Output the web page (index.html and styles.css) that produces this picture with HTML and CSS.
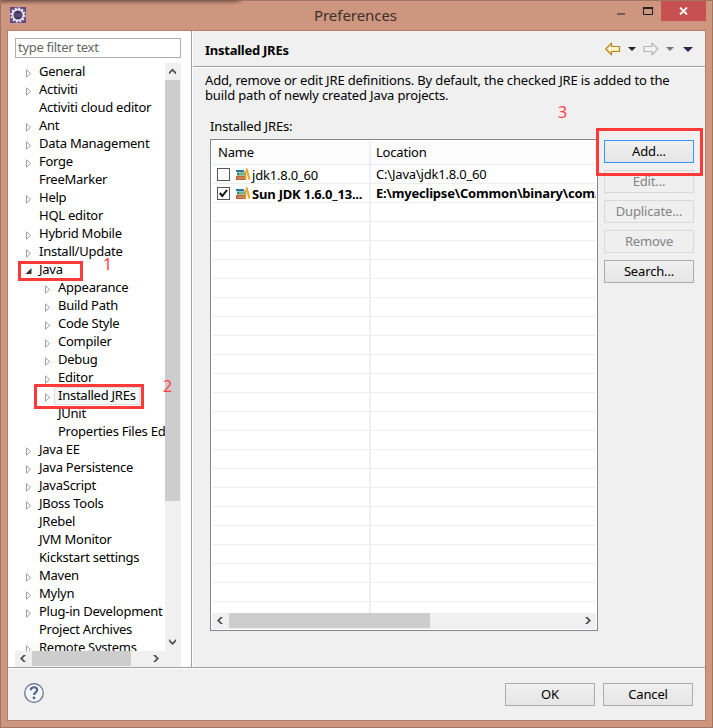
FILE: index.html
```html
<!DOCTYPE html>
<html lang="en">
<head>
<meta charset="utf-8">
<title>Preferences</title>
<link rel="stylesheet" href="styles.css">
</head>
<body>
<div class="window">
  <header class="titlebar">
    <svg class="app-icon" width="16" height="16" viewBox="0 0 16 16"><rect width="16" height="16" fill="#634786"/><circle cx="8" cy="8" r="6.800" fill="none" stroke="#e8e4e8" stroke-width="1.800" stroke-dasharray="2 1.560"/><circle cx="8" cy="8" r="5.400" fill="#40345e" stroke="#efedf0" stroke-width="1.600"/><path d="M4 7h8M4 9h8" stroke="#6d6090"/></svg>
    <h1 class="title">Preferences</h1>
    <div class="controls">
      <svg width="50" height="20" viewBox="0 0 50 20"><path d="M2 12h8v2H2z" fill="#745c53"/><path d="M28 6h10v8H28z" fill="#222"/><path d="M29 8h8v5h-8z" fill="#ce967e"/></svg>
      <button class="close"><svg width="9" height="8" viewBox="0 0 9 8"><path d="M1 .5l7 7M8 .5l-7 7" stroke="#fff" stroke-width="1.800"/></svg></button>
    </div>
  </header>
  <div class="client">
    <div class="main">
      <aside class="sidebar">
        <div class="filter">type filter text</div>
        <div class="treebox">
          <ul class="tree" id="tree"></ul>
          <div class="vbar">
            <svg width="15" height="17" viewBox="0 0 15 17"><path d="M4 11.500V9l3.500-3.500L11 9v2.500L7.500 8z" fill="#505050"/></svg>
            <div class="vthumb"></div>
            <svg class="down" width="15" height="17" viewBox="0 0 15 17"><path d="M4 5v2.500L7.500 11 11 7.500V5L7.500 8.500z" fill="#505050"/></svg>
          </div>
          <div class="hbar">
            <svg width="17" height="16" viewBox="0 0 17 16"><path d="M11 4H8.500L5 7.500 8.500 11H11L7.500 7.500z" fill="#505050"/></svg>
            <div class="hthumb"></div>
            <svg class="right" width="17" height="16" viewBox="0 0 17 16"><path d="M5 4h2.500L11 7.500 7.500 11H5l3.500-3.500z" fill="#505050"/></svg>
          </div>
        </div>
      </aside>
      <section class="page">
        <div class="page-head">
          <h2>Installed JREs</h2>
          <svg class="nav" width="90" height="14" viewBox="0 0 90 14">
            <defs><linearGradient id="gold" x2="0" y2="1"><stop stop-color="#fffef0"/><stop offset="1" stop-color="#fbe5a0"/></linearGradient></defs>
            <path d="M.8 7L6.500 1.200V4.500h8v5h-8v3.300z" fill="url(#gold)" stroke="#b9821e" stroke-width="1.200" stroke-linejoin="round"/>
            <path d="M23 5h8l-4 4z" fill="#222"/>
            <path d="M52.800 7L47 1.200V4.500h-8v5h8v3.300z" fill="#f4f4f4" stroke="#b4b4b4" stroke-width="1.200" stroke-linejoin="round"/>
            <path d="M61 5h8l-4 4z" fill="#777"/>
            <path d="M78 5h10L83 10z" fill="#35204f"/>
          </svg>
        </div>
        <div class="page-body">
          <p class="desc">Add, remove or edit JRE definitions. By default, the checked JRE is added to the<br>build path of newly created Java projects.</p>
          <div class="label">Installed JREs:</div>
          <div class="jres">
            <div class="table">
              <div class="grid">
                <div class="row head"><span>Name</span><span>Location</span></div>
                <div class="row"><span class="name"><i class="check"></i><svg class="books" width="16" height="13" viewBox="0 0 16 13"><path d="M1 2h8v2H1z" fill="#2477a6"/><path d="M2 4.500h8v3H2z" fill="#31895c"/><path d="M4 5.500h6v1H4z" fill="#b8dbb4"/><path d="M1 8h10v4H1z" fill="#bb663c"/><path d="M3 9.500h8v1H3z" fill="#e0a27c"/><path d="M10.500 1l2-1 3 11-2 1z" fill="#e9ac26"/><path d="M10.500 3v9" stroke="#d9982a" stroke-width="1.500"/></svg><b class="t">jdk1.8.0_60</b></span><span>C:\Java\jdk1.8.0_60</span></div>
                <div class="row bold"><span class="name"><i class="check"><svg width="11" height="11" viewBox="0 0 11 11"><path d="M1.800 5l2.500 3L9 2" fill="none" stroke="#111" stroke-width="2"/></svg></i><svg class="books" width="16" height="13" viewBox="0 0 16 13"><path d="M1 2h8v2H1z" fill="#2477a6"/><path d="M2 4.500h8v3H2z" fill="#31895c"/><path d="M4 5.500h6v1H4z" fill="#b8dbb4"/><path d="M1 8h10v4H1z" fill="#bb663c"/><path d="M3 9.500h8v1H3z" fill="#e0a27c"/><path d="M10.500 1l2-1 3 11-2 1z" fill="#e9ac26"/><path d="M10.500 3v9" stroke="#d9982a" stroke-width="1.500"/></svg><b class="t">Sun JDK 1.6.0_13...</b></span><span class="path">E:\myeclipse\Common\binary\com.</span></div>
              </div>
              <div class="tbar">
                <svg width="17" height="16" viewBox="0 0 17 16"><path d="M11 4H8.500L5 7.500 8.500 11H11L7.500 7.500z" fill="#505050"/></svg>
                <div class="tthumb"></div>
                <svg class="right" width="17" height="16" viewBox="0 0 17 16"><path d="M6 4h2.500L12 7.500 8.500 11H6l3.500-3.500z" fill="#505050"/></svg>
              </div>
            </div>
            <div class="actions">
              <button class="btn focus">Add...</button>
              <button class="btn off">Edit...</button>
              <button class="btn off">Duplicate...</button>
              <button class="btn off">Remove</button>
              <button class="btn">Search...</button>
            </div>
          </div>
        </div>
      </section>
    </div>
    <footer class="footer">
      <svg width="20" height="20" viewBox="0 0 20 20"><circle cx="10" cy="10" r="9.300" fill="#f4f5f7" stroke="#5c6c8b" stroke-width="1.200"/><path d="M6.800 7.300C7 3.200 13.300 3.400 13.100 7c-.1 2.300-3 2.500-3 5" fill="none" stroke="#52678c" stroke-width="2.200"/><circle cx="10" cy="14.900" r="1.400" fill="#52678c"/></svg>
      <button class="btn ok">OK</button>
      <button class="btn">Cancel</button>
    </footer>
  </div>
  <div class="mark m1"></div><div class="mark m2"></div><div class="mark m3"></div>
  <span class="num n1">1</span><span class="num n2">2</span><span class="num n3">3</span>
</div>
<script src="tree.js"></script>
</body>
</html>
```
FILE: styles.css
```css
* { box-sizing: border-box; }
body { margin: 0; font: 13px/18px "Noto Sans", sans-serif; color: #000; overflow: hidden; }
svg { display: block; flex: none; }
button { font: inherit; padding: 0; margin: 0; }
.window { position: relative; width: 713px; height: 728px; padding: 0 6px 6px; background: #ce967e; border: 1px solid #a07562; display: flex; flex-direction: column; }
.window::before { content: ""; position: absolute; left: 0; top: -1px; width: 243px; height: 5px; background: linear-gradient(#7f5c4e, #ce967e00); mask-image: linear-gradient(90deg, #000 96%, transparent); }
.titlebar { height: 29px; flex: none; display: flex; align-items: flex-start; }
.app-icon { margin: 6px 0 0 3px; }
.title { margin: 3px 0 0 288px; font-size: 15px; line-height: 22px; font-weight: 400; color: #3a302c; width: 84px; white-space: nowrap; letter-spacing: -.05px; }
.controls { display: flex; margin-left: auto; }
.controls > svg { margin: 0 -4px 0 0; }
.close { width: 45px; height: 20px; border: 0; background: #c75050; display: flex; align-items: center; justify-content: center; }
.client { flex: 1; min-height: 0; display: flex; flex-direction: column; background: #f0f0f0; border: 1px solid #b17f6a; }
.main { height: 637px; flex: none; display: flex; border-bottom: 1px solid #a0a0a0; }
.sidebar { width: 184px; flex: none; background: #fff; border-right: 1px solid #a0a0a0; padding: 7px 10px 0 7px; }
.filter { height: 20px; border: 1px solid #abadb3; color: #666; line-height: 17px; padding-left: 2px; letter-spacing: -.3px; }
.treebox { margin-top: 5px; display: grid; grid-template: 588px 16px / 150px 16px; background: #f0f0f0; }
.tree { margin: 0; padding: 0; list-style: none; overflow: hidden; background: #fff; letter-spacing: -.25px; }
.tree li { height: 18px; display: flex; align-items: center; padding-left: 10px; white-space: nowrap; }
.tree li svg { margin: 3px 7px 0 0; }
.tree li.child { padding-left: 29px; }
.tree span { height: 18px; line-height: 16px; }
.tree .selected { background: #f7f7f7; outline: 1px solid #dedede; outline-offset: -1px; padding: 0 4px; margin-left: -4px; }
.vbar { display: flex; flex-direction: column; }
.vthumb { width: 15px; height: 421px; background: #cdcdcd; }
.down { margin-top: auto; }
.hbar, .tbar { display: flex; background: #f0f0f0; }
.hthumb { width: 99px; height: 15px; background: #cdcdcd; }
.right { margin-left: auto; }
.page { flex: 1; min-width: 0; border-left: 1px solid #fff; }
.page-head { height: 36px; border-bottom: 1px solid #a0a0a0; box-shadow: 0 1px #fff; display: flex; align-items: center; justify-content: space-between; padding: 0 10px 0 12px; }
h2 { margin: 2px 0 0; font-size: 13px; line-height: 18px; letter-spacing: -.25px; }
.nav { margin-top: 1px; }
.page-body { padding: 6px 2px 0 12px; }
.desc { margin: 0; line-height: 15px; white-space: nowrap; letter-spacing: -.15px; }
.label { margin: 14px 0 0 5px; height: 18px; letter-spacing: -.15px; }
.jres { display: flex; gap: 6px; margin: 4px 0 0 5px; }
.table { width: 388px; height: 492px; border: 1px solid #828790; background: #fff; padding: 1px; }
.grid { height: 472px; overflow: hidden; background: linear-gradient(#ebf1f7, #ebf1f7) 157px 0 / 2px 472px no-repeat, repeating-linear-gradient(#fff 0 18px, #eee 18px 19px) 0 24px no-repeat; }
.row { height: 19px; display: grid; grid-template-columns: 157px 227px; line-height: 18px; white-space: nowrap; letter-spacing: -.2px; }
.row.head { height: 24px; line-height: 22px; background: linear-gradient(#ebf1f7, #ebf1f7) 157px 0 / 2px 24px no-repeat, #fcfcfc; border-bottom: 1px solid #e5edf8; }
.row > span { padding-left: 7px; overflow: hidden; }
.row > span:first-child { padding-left: 6px; }
.row .name.name { padding-left: 5px; display: flex; align-items: center; }
.check { width: 13px; height: 13px; border: 1px solid #555; background: #fff; flex: none; }
.books { margin: 0 0 0 5px; }
.t { font-weight: 400; margin-left: 1px; }
.bold, .bold .t { font-weight: 700; }
.tbar { height: 16px; }
.tthumb { width: 201px; height: 15px; background: #cdcdcd; }
.actions { display: flex; flex-direction: column; gap: 7px; padding-top: 1px; }
.btn { width: 90px; height: 23px; border: 1px solid #acacac; background: linear-gradient(#f0f0f0, #e5e5e5); line-height: 21px; color: #000; letter-spacing: -.15px; padding-bottom: 1px; }
.focus { border-color: #3399ff; }
.off { color: #838383; border-color: #d9d9d9; background: #efefef; }
.footer { flex: 1; border-top: 1px solid #fff; display: flex; align-items: flex-start; padding: 14px 12px 0 16px; gap: 8px; }
.ok { margin-left: auto; }
.mark { position: absolute; border: 3px solid #ff3838; }
.m1 { left: 17px; top: 260px; width: 65px; height: 20px; }
.m2 { left: 33px; top: 383px; width: 110px; height: 25px; }
.m3 { left: 595px; top: 127px; width: 107px; height: 48px; }
.num { position: absolute; color: #ff4040; font-size: 16px; line-height: 20px; }
.n1 { left: 102px; top: 253px; }
.n2 { left: 162px; top: 375px; }
.n3 { left: 557px; top: 101px; }
```
FILE: tree.js
```js
// "+" collapsed, "-" expanded, "." leaf; ">" marks a child level.
const items = ["+General", "+Activiti", ".Activiti cloud editor", "+Ant", "+Data Management", "+Forge", ".FreeMarker", "+Help", ".HQL editor", "+Hybrid Mobile", "+Install/Update", "-Java", ">+Appearance", ">+Build Path", ">+Code Style", ">+Compiler", ">+Debug", ">+Editor", ">+Installed JREs", ">.JUnit", ">.Properties Files Ed", "+Java EE", "+Java Persistence", "+JavaScript", "+JBoss Tools", ".JRebel", ".JVM Monitor", ".Kickstart settings", "+Maven", "+Mylyn", "+Plug-in Development", ".Project Archives", "+Remote Systems"];
const arrows = {
  "+": '<path d="M1.500 .8v7.400L5.500 4.500z" fill="#fff" stroke="#a0a0a0"/>',
  "-": '<path d="M6.500 1v6H.5z" fill="#333"/>',
  ".": ""
};
document.getElementById("tree").innerHTML = items.map(item => {
  const child = item[0] === ">";
  const s = child ? item.slice(1) : item;
  const name = s.slice(1);
  return `<li class="${child ? "child" : ""}"><svg width="7" height="9" viewBox="0 0 7 9">${arrows[s[0]]}</svg><span class="${name === "Installed JREs" ? "selected" : ""}">${name}</span></li>`;
}).join("");
```
